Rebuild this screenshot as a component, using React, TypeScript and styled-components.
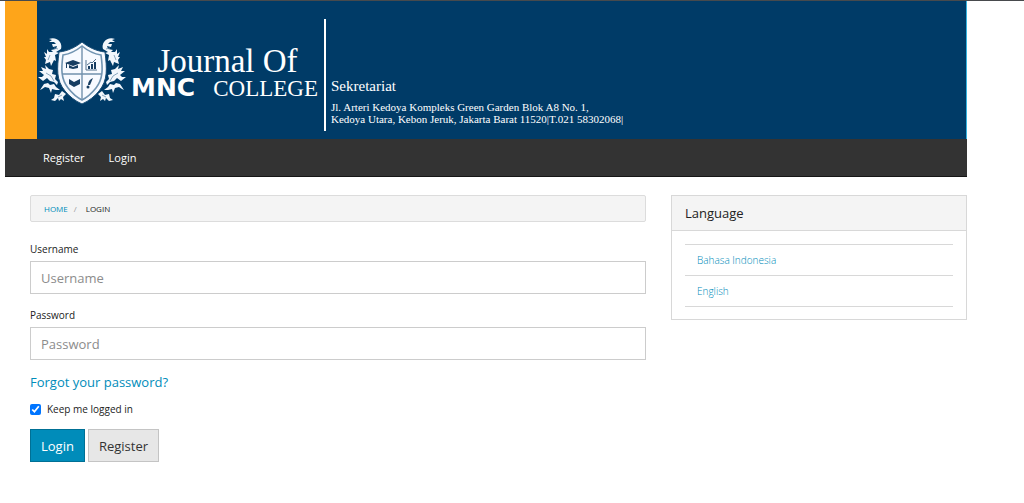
import React from "react";
import styled, { createGlobalStyle } from "styled-components";

const GlobalStyle = createGlobalStyle`
  *, *::before, *::after { box-sizing: border-box; }
  body {
    margin: 0;
    background: #fff;
    color: #222;
    font-family: "Open Sans", "Liberation Sans", sans-serif;
    font-size: 10px;
    line-height: 15px;
  }
  a { color: #008cba; text-decoration: none; }
`;

const Page = styled.div`
  border-top: 1px solid #474a4d;
  padding: 0 57px 40px 5px;
`;

const Banner = styled.header`
  display: flex;
  height: 138px;
  background: #003b67;
  border-left: 32px solid #fea51a;
  border-right: 1px solid #35b4e0;
  color: #fff;
  font-family: "Liberation Serif", serif;
`;

const Crest = styled.svg`
  flex: none;
  width: 90px;
  height: 70px;
  margin-top: 34px;
`;

const Brand = styled.div`
  flex: none;
  width: 187px;
  margin: 42px 6px 0 4px;
`;

const Title = styled.h1`
  margin: 0;
  padding-left: 6px;
  font-size: 33px;
  font-weight: 400;
  line-height: 36px;
  text-align: center;
`;

const College = styled.div`
  display: flex;
  justify-content: space-between;
  align-items: baseline;
  font-size: 23px;
  line-height: 18px;
`;

const Mnc = styled.span`
  font-family: "DejaVu Sans", sans-serif;
  font-size: 25px;
  font-weight: 700;
`;

const Contact = styled.address`
  margin: 18px 0 8px;
  padding: 60px 0 0 5px;
  border-left: 2px solid #fff;
  font-size: 11px;
  font-style: normal;
  line-height: 12px;
  white-space: nowrap;
`;

const Office = styled.div`
  margin-bottom: 7px;
  font-size: 15px;
  line-height: 15px;
`;

const Nav = styled.nav`
  display: flex;
  gap: 24px;
  height: 38px;
  padding-left: 38px;
  align-items: center;
  background: #333;
  border-bottom: 1px solid #161616;
`;

const NavLink = styled.a`
  color: #fff;
  font-size: 11px;
`;

const Columns = styled.div`
  display: grid;
  grid-template-columns: minmax(0, 616fr) minmax(0, 296fr);
  gap: 25px;
  align-items: start;
  padding: 18px 0 0 25px;
`;

const Breadcrumbs = styled.nav`
  display: flex;
  align-items: center;
  height: 27px;
  padding: 0 13px;
  margin-bottom: 20px;
  background: #f4f4f4;
  border: 1px solid #dcdcdc;
  border-radius: 2px;
  font-size: 8px;
  text-transform: uppercase;
`;

const Slash = styled.span`
  margin: 0 9px 0 6px;
  color: #999;
`;

const Field = styled.div`
  margin-bottom: 14px;
`;

const Label = styled.label`
  display: block;
  margin-bottom: 4px;
  color: #222;
`;

const TextInput = styled.input`
  display: block;
  width: 100%;
  height: 33px;
  padding: 0 10px;
  border: 1px solid #ccc;
  border-radius: 0;
  background: #fff;
  color: #444;
  font: 13px "Open Sans", sans-serif;
  &::placeholder { color: #8c8c8c; opacity: 1; }
`;

const Forgot = styled.a`
  display: block;
  width: fit-content;
  font-size: 13px;
  line-height: 16px;
`;

const Remember = styled.label`
  display: flex;
  align-items: center;
  gap: 6px;
  width: fit-content;
  margin: 12px 0;
`;

const Checkbox = styled.input`
  width: 11px;
  height: 11px;
  margin: 0;
  accent-color: #0075ff;
`;

const Actions = styled.div`
  display: flex;
  gap: 3px;
`;

const Button = styled.button<{ $secondary?: boolean }>`
  height: 33px;
  padding: 0 10px;
  border: 1px solid ${(p) => (p.$secondary ? "#c4c4c4" : "#007095")};
  background: ${(p) => (p.$secondary ? "#e7e7e7" : "#008cba")};
  color: ${(p) => (p.$secondary ? "#333" : "#fff")};
  font: 13px "Open Sans", sans-serif;
`;

const Panel = styled.aside`
  border: 1px solid #d8d8d8;
`;

const PanelTitle = styled.h2`
  margin: 0;
  padding: 0 13px;
  background: #f4f4f4;
  border-bottom: 1px solid #d8d8d8;
  font-size: 13px;
  font-weight: 400;
  line-height: 34px;
`;

const Languages = styled.ul`
  margin: 13px 13px 12px;
  padding: 0;
  border-top: 1px solid #d8d8d8;
  list-style: none;
`;

const Language = styled.li`
  padding: 0 12px;
  border-bottom: 1px solid #d8d8d8;
  font-weight: 300;
  line-height: 30px;
`;

const Flourish = () => (
  <g fill="#f2f7fc">
    <path d="M24 14 C26 8 20 1 12 4 L15 5 L12 7 L17 7 L19 9 L15 9 L16 12 L20 11 L19 14 L14 15 L16 17 L12 17 L10 14 L10 19 L7 17 L9 22 L7 22 L9 25 L8 29 L13 27 L14 31 L17 25 L19 26 L18 20 L22 18 L19 17 Z" />
    <path d="M1 42 L5 42 L7 40 L2 36 L6 36 L4 32 L9 34 L8 30 L12 34 L16 35 L15 39 L19 40 L18 44 L21 47 L20 50 L17 47 L13 46 L10 43 L6 46 Z" />
    <path d="M3 55 L7 49 L11 48 L13 50 L17 49 L19 52 L23 55 L19 55 L15 54 L14 58 L12 53 L8 52 L5 54 Z" />
    <path d="M14 65 L17 63 L18 59 L22 60 L25 56 L29 59 L26 62 L27 66 L24 64 L22 66 L21 63 L18 66 Z" />
    <path d="M17 13 L21 14 M13 20 L11 25 M9 38 L14 41 L17 46 M21 62 L25 60" fill="none" stroke="#6f92ad" strokeWidth="0.8" />
  </g>
);

const CollegeCrest = () => (
  <Crest viewBox="0 0 90 70" role="img" aria-label="College crest">
    <Flourish />
    <g transform="translate(90 0) scale(-1 1)"><Flourish /></g>
    <path d="M45 7 C39 12 31 16 22 17 C20 34 19 45 28 56 C32 61 38 66 45 69 C52 66 58 61 62 56 C71 45 70 34 68 17 C59 16 51 12 45 7Z" fill="#f7faff" stroke="#174c75" />
    <path d="M45 11 C39 16 32 19 26 20 C24 34 24 44 31 53 C35 58 39 62 45 65 C51 62 55 58 59 53 C66 44 66 34 64 20 C58 19 51 16 45 11Z" fill="none" stroke="#7194b1" strokeWidth="1.6" />
    <path d="M45 12 V64 M25 39 H65" stroke="#7291ad" strokeWidth="1.4" />
    <g fill="#173d61">
      <path d="M28 28 L36 25 L44 28 L36 31Z" />
      <path d="M32 30 L36 32 L41 30 V33 L36 34 L32 33Z" />
      <path d="M29 28 H30 V33 H29Z" />
      <path d="M32 44 L37 47 L43 44 V49 L37 52 L32 49Z" />
      <path d="M51 50 Q51 45 56 43 L53 50Z" />
      <circle cx="51" cy="52" r="1.5" />
      <path d="M51 31 H53 V34 H51Z M54 29 H56 V34 H54Z M57 27 H59 V34 H57Z" />
    </g>
    <path d="M49 25 V35 H60 M50 30 L54 27 L55 28 L59 24" fill="none" stroke="#55738e" />
  </Crest>
);

export default function App() {
  return (
    <>
      <GlobalStyle />
      <Page>
        <Banner>
          <CollegeCrest />
          <Brand>
            <Title>Journal Of</Title>
            <College><Mnc>MNC</Mnc><span>COLLEGE</span></College>
          </Brand>
          <Contact>
            <Office>Sekretariat</Office>
            Jl. Arteri Kedoya Kompleks Green Garden Blok A8 No. 1,<br />
            Kedoya Utara, Kebon Jeruk, Jakarta Barat 11520|T.021 58302068|
          </Contact>
        </Banner>
        <Nav aria-label="Main">
          <NavLink href="#register">Register</NavLink>
          <NavLink href="#login">Login</NavLink>
        </Nav>
        <Columns>
          <main>
            <Breadcrumbs aria-label="Breadcrumb">
              <a href="#home">Home</a><Slash>/</Slash><span>Login</span>
            </Breadcrumbs>
            <form onSubmit={(e) => e.preventDefault()}>
              <Field>
                <Label htmlFor="username">Username</Label>
                <TextInput id="username" placeholder="Username" />
              </Field>
              <Field>
                <Label htmlFor="password">Password</Label>
                <TextInput id="password" type="password" placeholder="Password" />
              </Field>
              <Forgot href="#forgot">Forgot your password?</Forgot>
              <Remember>
                <Checkbox type="checkbox" defaultChecked />
                Keep me logged in
              </Remember>
              <Actions>
                <Button type="submit">Login</Button>
                <Button type="button" $secondary>Register</Button>
              </Actions>
            </form>
          </main>
          <Panel>
            <PanelTitle>Language</PanelTitle>
            <Languages>
              <Language><a href="#id">Bahasa Indonesia</a></Language>
              <Language><a href="#en">English</a></Language>
            </Languages>
          </Panel>
        </Columns>
      </Page>
    </>
  );
}
